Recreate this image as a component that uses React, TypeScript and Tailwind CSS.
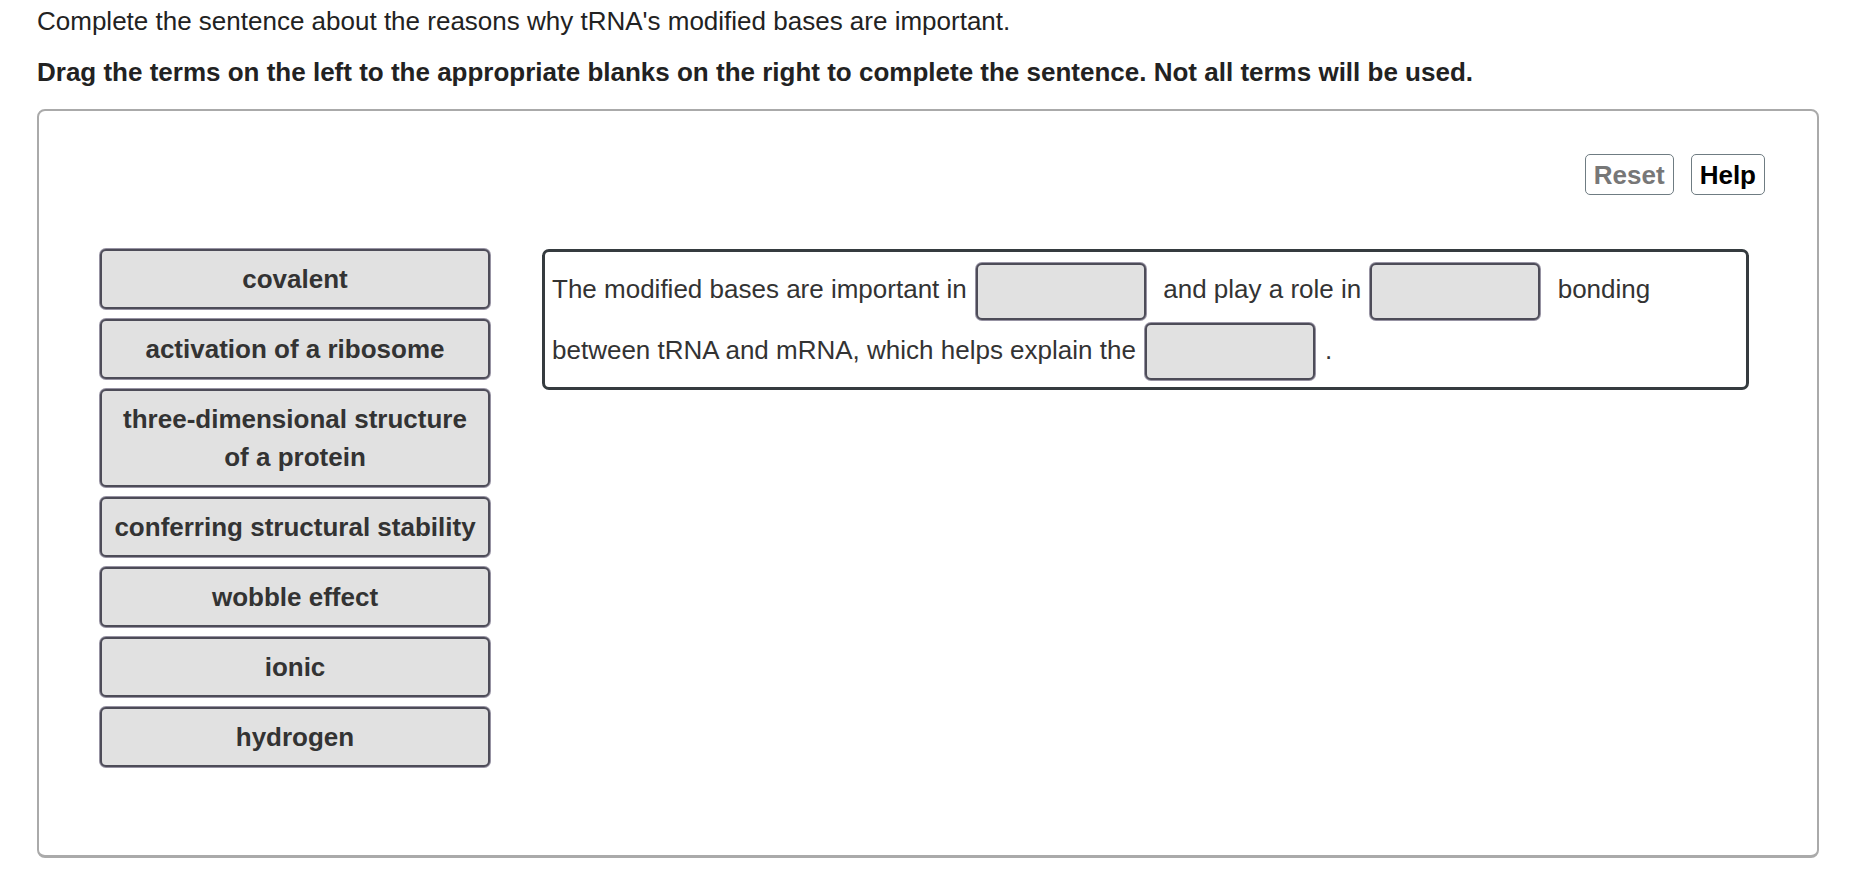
import React from "react";

type Term = { id: string; label: string };

const terms: Term[] = [
  { id: "covalent", label: "covalent" },
  { id: "ribosome", label: "activation of a ribosome" },
  { id: "protein", label: "three-dimensional structure of a protein" },
  { id: "stability", label: "conferring structural stability" },
  { id: "wobble", label: "wobble effect" },
  { id: "ionic", label: "ionic" },
  { id: "hydrogen", label: "hydrogen" },
];

// empty drop target inside the sentence
function Blank() {
  return (
    <span className="inline-block align-middle w-[170px] h-[57px] ml-[2px] mr-[10px] rounded-[6px] border-2 border-[#4d4c58] bg-[#e1e1e1] shadow-[0_0_0_1px_#9793a3]" />
  );
}

function TermChip({ term }: { term: Term }) {
  return (
    <div className="w-full rounded-[6px] border-2 border-[#4d4c58] bg-[#e1e1e1] shadow-[0_0_0_1px_#9793a3] py-[9px] px-[8px] text-center font-bold text-[#333] leading-[38px]">
      {term.label}
    </div>
  );
}

export default function App() {
  return (
    <div
      className="min-h-screen bg-white pl-[37px] pr-[49px] pt-[3px] text-[26px] text-[#222]"
      style={{ fontFamily: '"Liberation Sans", Arial, Helvetica, sans-serif' }}
    >
      <p className="leading-[36px]">
        Complete the sentence about the reasons why tRNA's modified bases are important.
      </p>
      <p className="mt-[15px] font-bold leading-[36px]">
        Drag the terms on the left to the appropriate blanks on the right to complete the sentence. Not all terms will be used.
      </p>

      <div className="mt-[19px] h-[749px] rounded-[8px] border-2 border-b-[3px] border-[#aaaaaa] pt-[43px] pl-[61px] pr-[52px]">
        <div className="flex justify-end gap-[17px]">
          <button className="h-[41px] rounded-[5px] border-[1.5px] border-[#6f7c82] px-[8px] font-bold leading-[38px] text-[#777]">
            Reset
          </button>
          <button className="h-[41px] rounded-[5px] border-[1.5px] border-[#6f7c82] px-[8px] font-bold leading-[38px] text-black">
            Help
          </button>
        </div>

        <div className="mt-[54px] flex items-start gap-[52px]">
          <div className="flex w-[390px] shrink-0 flex-col gap-[10px]">
            {terms.map((t) => (
              <TermChip key={t.id} term={t} />
            ))}
          </div>

          <div className="mr-[16px] flex-1 rounded-[7px] border-[3px] border-[#353b3f] bg-white pl-[7px] pr-[8px] pt-[7px] pb-[7px] leading-[60px] text-[#333]">
            The modified bases are important in <Blank /> and play a role in <Blank /> bonding
            <br />
            between tRNA and mRNA, which helps explain the <Blank />.
          </div>
        </div>
      </div>
    </div>
  );
}
